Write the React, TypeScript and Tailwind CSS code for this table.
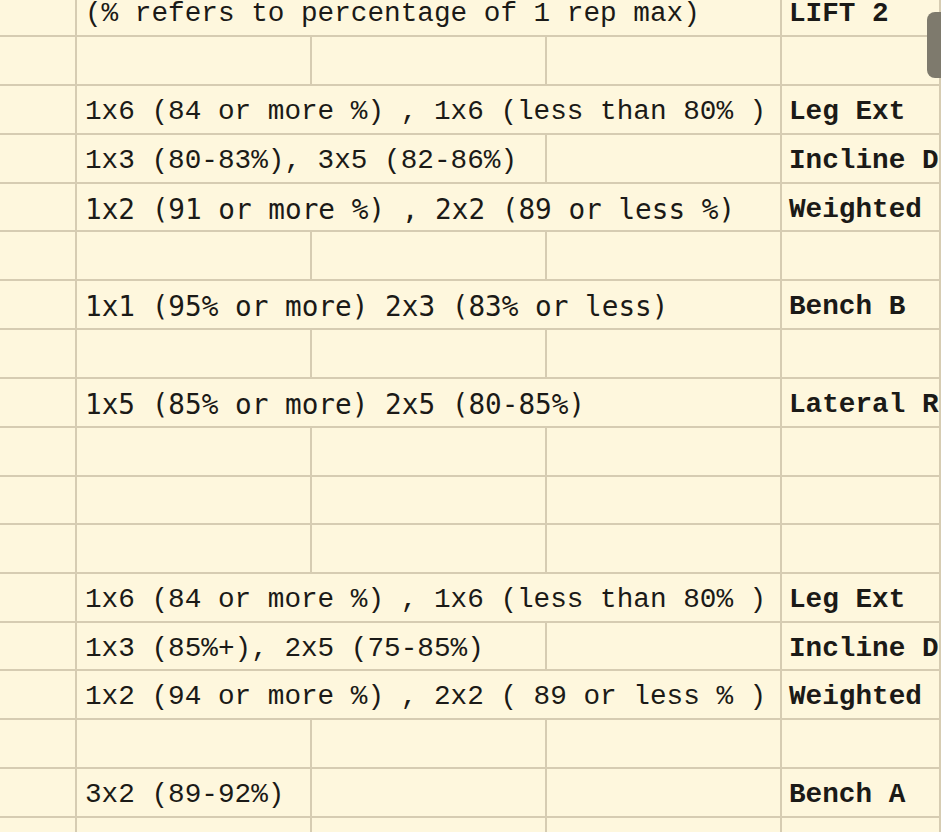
import React from 'react';

type Row = {
  text?: string;
  span?: 1 | 2 | 3;
  lift?: string;
  dv?: boolean;
  h: number;
};

// spreadsheet rows, top row is partly scrolled out of view
const rows: Row[] = [
  { text: '(% refers to percentage of 1 rep max)', span: 3, lift: 'LIFT 2', h: 49 },
  { h: 49 },
  { text: '1x6 (84 or more %) , 1x6 (less than 80% )', span: 3, lift: 'Leg Ext', h: 49 },
  { text: '1x3 (80-83%), 3x5 (82-86%)', span: 2, lift: 'Incline D', h: 49 },
  { text: '1x2 (91 or more %) , 2x2 (89 or less %)', span: 3, lift: 'Weighted', dv: true, h: 48 },
  { h: 49 },
  { text: '1x1 (95% or more) 2x3 (83% or less)', span: 3, lift: 'Bench B', dv: true, h: 49 },
  { h: 49 },
  { text: '1x5 (85% or more) 2x5 (80-85%)', span: 3, lift: 'Lateral R', dv: true, h: 49 },
  { h: 49 },
  { h: 48 },
  { h: 49 },
  { text: '1x6 (84 or more %) , 1x6 (less than 80% )', span: 3, lift: 'Leg Ext', h: 49 },
  { text: '1x3 (85%+), 2x5 (75-85%)', span: 2, lift: 'Incline D', h: 48 },
  { text: '1x2 (94 or more %) , 2x2 ( 89 or less % )', span: 3, lift: 'Weighted', h: 49 },
  { h: 49 },
  { text: '3x2 (89-92%)', span: 1, lift: 'Bench A', h: 49 },
  { h: 49 },
];

const spanClass = { 1: 'col-span-1', 2: 'col-span-2', 3: 'col-span-3' };
const cell = 'border-r-2 border-b-2 border-[#d6ccb2] flex items-center overflow-visible whitespace-nowrap';
const mono = "font-['Liberation_Mono','DejaVu_Sans_Mono',monospace]";
const dejavu = "font-['DejaVu_Sans_Mono',monospace]";

function SheetRow({ row }: { row: Row }) {
  const rest = row.text ? 3 - (row.span ?? 3) : 3;
  return (
    <div
      className="grid grid-cols-[77px_235px_235px_235px_1fr]"
      style={{ height: row.h }}
    >
      <div className={cell} />
      {row.text ? (
        <div className={`${cell} ${spanClass[row.span ?? 3]} pl-[8px] pt-[5px] relative z-10`}>
          <span className={row.dv ? dejavu : mono}>{row.text}</span>
        </div>
      ) : null}
      {Array.from({ length: rest }).map((_, i) => (
        <div key={i} className={cell} />
      ))}
      <div className={`${cell} border-r-0 pl-[7px] pt-[5px]`}>
        {row.lift && <span className={`${mono} font-bold`}>{row.lift}</span>}
      </div>
    </div>
  );
}

export default function App() {
  return (
    <div className="relative w-[941px] h-[832px] overflow-hidden bg-[#fef7dd] text-[#1b1a17] text-[27.7px] leading-none">
      <div className="-mt-[12px]">
        {rows.map((row, i) => (
          <SheetRow key={i} row={row} />
        ))}
      </div>
      {/* overlay scrollbar thumb */}
      <div className="absolute right-[-7px] top-[12px] w-[21px] h-[66px] rounded-[8px] bg-[#7e7a6d]" />
    </div>
  );
}
